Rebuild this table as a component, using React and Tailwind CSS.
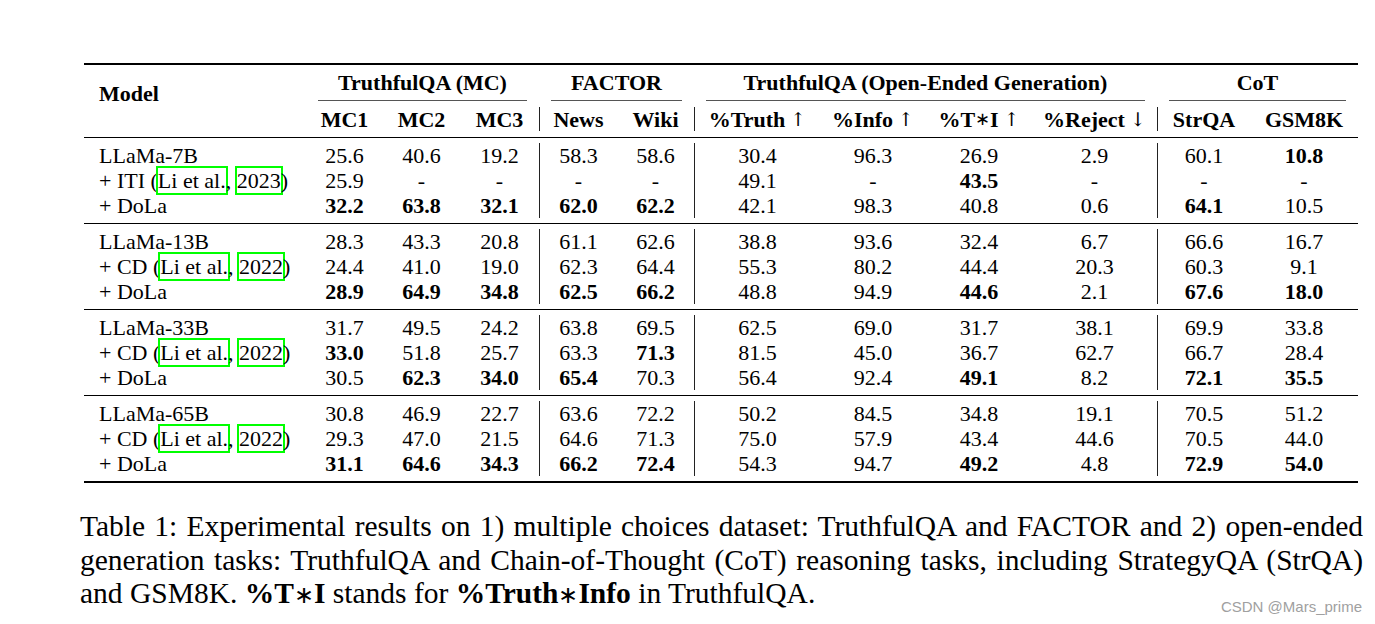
import clsx from 'clsx'

const GRID = 'grid grid-cols-[222px_77px_77px_79px_78px_77px_126px_106px_106px_125px_93px_108px]'

// value columns (label excluded) that carry a vertical bar on their left
const BARS = new Set([3, 5, 9])

const Cite = ({ children }) => (
  <span className="outline-2 outline-[#00ff00] outline-offset-0">{children}</span>
)

const Ast = () => <span className="font-normal text-[0.8em]">∗</span>

const Arrow = ({ children }) => (
  <span className="ml-[5px] font-normal [font-family:'DejaVu_Serif',serif] text-[19px]">{children}</span>
)

const cd = (
  <>
    + CD (<Cite>Li et al.</Cite>, <Cite>2022</Cite>)
  </>
)

const BLOCKS = [
  [
    ['LLaMa-7B', '25.6 40.6 19.2 58.3 58.6 30.4 96.3 26.9 2.9 60.1 *10.8'],
    [
      <>
        + ITI (<Cite>Li et al.</Cite>, <Cite>2023</Cite>)
      </>,
      '25.9 - - - - 49.1 - *43.5 - - -',
    ],
    ['+ DoLa', '*32.2 *63.8 *32.1 *62.0 *62.2 42.1 98.3 40.8 0.6 *64.1 10.5'],
  ],
  [
    ['LLaMa-13B', '28.3 43.3 20.8 61.1 62.6 38.8 93.6 32.4 6.7 66.6 16.7'],
    [cd, '24.4 41.0 19.0 62.3 64.4 55.3 80.2 44.4 20.3 60.3 9.1'],
    ['+ DoLa', '*28.9 *64.9 *34.8 *62.5 *66.2 48.8 94.9 *44.6 2.1 *67.6 *18.0'],
  ],
  [
    ['LLaMa-33B', '31.7 49.5 24.2 63.8 69.5 62.5 69.0 31.7 38.1 69.9 33.8'],
    [cd, '*33.0 51.8 25.7 63.3 *71.3 81.5 45.0 36.7 62.7 66.7 28.4'],
    ['+ DoLa', '30.5 *62.3 *34.0 *65.4 70.3 56.4 92.4 *49.1 8.2 *72.1 *35.5'],
  ],
  [
    ['LLaMa-65B', '30.8 46.9 22.7 63.6 72.2 50.2 84.5 34.8 19.1 70.5 51.2'],
    [cd, '29.3 47.0 21.5 64.6 71.3 75.0 57.9 43.4 44.6 70.5 44.0'],
    ['+ DoLa', '*31.1 *64.6 *34.3 *66.2 *72.4 54.3 94.7 *49.2 4.8 *72.9 *54.0'],
  ],
]

const SUB = [
  'MC1',
  'MC2',
  'MC3',
  'News',
  'Wiki',
  <>%Truth<Arrow>↑</Arrow></>,
  <>%Info<Arrow>↑</Arrow></>,
  <>%T<Ast />I<Arrow>↑</Arrow></>,
  <>%Reject<Arrow>↓</Arrow></>,
  'StrQA',
  'GSM8K',
]

const GROUPS = [
  { title: 'TruthfulQA (MC)', span: 'col-span-3' },
  { title: 'FACTOR', span: 'col-span-2' },
  { title: 'TruthfulQA (Open-Ended Generation)', span: 'col-span-4' },
  { title: 'CoT', span: 'col-span-2' },
]

function Row({ label, values }) {
  return (
    <div className={clsx(GRID, 'h-[25px]')}>
      <div className="flex items-center whitespace-pre pl-[15px]">{label}</div>
      {values.split(' ').map((v, i) => (
        <div
          key={i}
          className={clsx(
            'flex items-center justify-center',
            BARS.has(i) && 'border-l border-[#222]',
            v.startsWith('*') && 'font-bold'
          )}
        >
          {v.replace('*', '')}
        </div>
      ))}
    </div>
  )
}

function Header() {
  return (
    <div className={clsx(GRID, 'grid-rows-[35px_1px_36px] font-bold')}>
      <div className="row-span-3 pl-[15px] pt-[16px]">Model</div>
      {GROUPS.map((g) => (
        <div key={g.title} className={clsx(g.span, 'flex items-center justify-center whitespace-nowrap')}>
          {g.title}
        </div>
      ))}
      {GROUPS.map((g) => (
        <div key={g.title} className={clsx(g.span, 'mx-[12px] bg-[#555]')} />
      ))}
      {SUB.map((s, i) => (
        <div
          key={i}
          className={clsx(
            'flex items-center justify-center whitespace-nowrap',
            BARS.has(i) && 'my-[6px] border-l border-[#222]'
          )}
        >
          {s}
        </div>
      ))}
    </div>
  )
}

export default function App() {
  return (
    <div className="relative min-h-[624px] w-[1375px] bg-white pl-[80px] pt-[63px] text-black [font-family:'Liberation_Serif','Times_New_Roman',serif]">
      <div className="ml-[4px] w-[1274px] text-[22px] leading-[25px]">
        <div className="h-[2px] bg-black" />
        <Header />
        {BLOCKS.map((rows, b) => (
          <div key={b}>
            <div className="h-px bg-black" />
            <div className="py-[5px]">
              {rows.map(([label, values], r) => (
                <Row key={r} label={label} values={values} />
              ))}
            </div>
          </div>
        ))}
        <div className="h-[2px] bg-black" />
      </div>

      <div className="mt-[27px] w-[1283px] text-[29.5px] leading-[33.5px]">
        <div className="whitespace-nowrap text-justify [text-align-last:justify]">
          Table 1: Experimental results on 1) multiple choices dataset: TruthfulQA and FACTOR and 2) open-ended
        </div>
        <div className="whitespace-nowrap text-justify [text-align-last:justify]">
          generation tasks: TruthfulQA and Chain-of-Thought (CoT) reasoning tasks, including StrategyQA (StrQA)
        </div>
        <div className="whitespace-nowrap">
          and GSM8K. <span className="font-bold">%T</span>
          <Ast />
          <span className="font-bold">I</span> stands for <span className="font-bold">%Truth</span>
          <Ast />
          <span className="font-bold">Info</span> in TruthfulQA.
        </div>
      </div>

      <div className="absolute right-[13px] top-[598px] [font-family:'Liberation_Sans',Arial,sans-serif] text-[15px] leading-[18px] text-[#a0a0a0]">
        CSDN @Mars_prime
      </div>
    </div>
  )
}
